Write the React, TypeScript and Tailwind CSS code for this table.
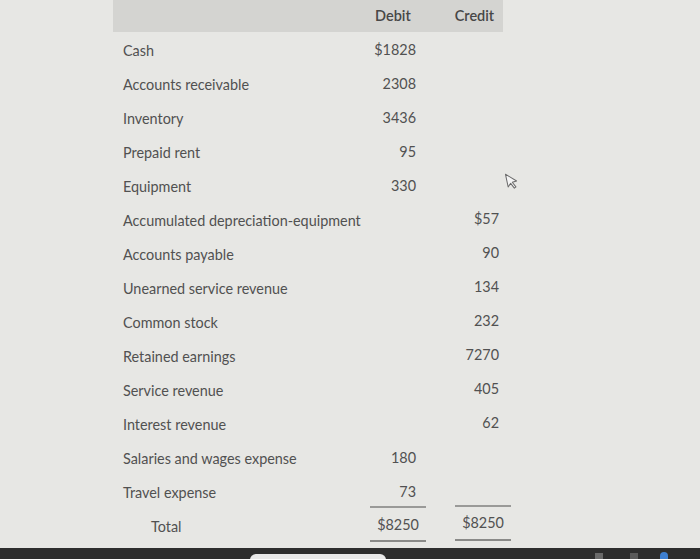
import React from "react";

type Row = { label: string; debit?: string; credit?: string };

const rows: Row[] = [
  { label: "Cash", debit: "$1828" },
  { label: "Accounts receivable", debit: "2308" },
  { label: "Inventory", debit: "3436" },
  { label: "Prepaid rent", debit: "95" },
  { label: "Equipment", debit: "330" },
  { label: "Accumulated depreciation-equipment", credit: "$57" },
  { label: "Accounts payable", credit: "90" },
  { label: "Unearned service revenue", credit: "134" },
  { label: "Common stock", credit: "232" },
  { label: "Retained earnings", credit: "7270" },
  { label: "Service revenue", credit: "405" },
  { label: "Interest revenue", credit: "62" },
  { label: "Salaries and wages expense", debit: "180" },
  { label: "Travel expense", debit: "73" },
];

export default function App() {
  return (
    <div
      className="relative w-[700px] h-[559px] overflow-hidden bg-[#e7e7e4] text-[#515151] flex flex-col"
      style={{ fontFamily: "Lato, 'Open Sans', sans-serif" }}
    >
      <div className="flex-1 pl-[113px]">
        <div className="w-[390px] h-8 bg-[#d4d4d1] flex items-start pt-[5px] text-[14.5px] font-semibold text-[#474747]">
          <span className="ml-[262px]">Debit</span>
          <span className="ml-[44px]">Credit</span>
        </div>
        <div className="pt-[2px]">
          {rows.map((r) => (
            <div key={r.label} className="flex h-[34px] items-center text-[14.4px]">
              <div className="w-[257px] pl-[10px] whitespace-nowrap">{r.label}</div>
              <div className="w-[56px] pr-[10px] text-right -translate-y-[1px]">{r.debit ?? ""}</div>
              <div className="w-[29px]" />
              <div className="w-[56px] pr-[12px] text-right -translate-y-[2px]">{r.credit ?? ""}</div>
            </div>
          ))}
        </div>
        <div className="flex h-[38px] items-center text-[14.4px] mt-[-5px]">
          <div className="w-[257px] pl-[38px] pt-[5px]">Total</div>
          <div className="w-[56px] h-[36px] flex items-center justify-center pt-[2px] border-t-2 border-b-2 border-t-[#9a9a98] border-b-[#8a8a88]">
            $8250
          </div>
          <div className="w-[29px]" />
          <div className="w-[56px] h-[36px] flex items-center justify-center border-t-2 border-b-2 border-t-[#9a9a98] border-b-[#8a8a88] -translate-y-[1px]">
            $8250
          </div>
        </div>
      </div>
      <div className="h-[11px] bg-[#2e2e2e] relative">
        <div className="absolute left-[250px] top-[6px] w-[136px] h-[12px] rounded-t-[6px] bg-[#e9e9e9]" />
        <div className="absolute left-[595px] top-[5px] w-[8px] h-[6px] bg-[#6a6a6a]" />
        <div className="absolute left-[630px] top-[5px] w-[8px] h-[6px] bg-[#5a5a5a]" />
        <div className="absolute left-[660px] top-[4px] w-[8px] h-[7px] rounded-t bg-[#3d7fd1]" />
      </div>
      <svg className="absolute left-[505px] top-[172px]" width="14" height="18" viewBox="0 0 14 18">
        <path
          d="M2 1 L2 14 L5.2 11 L7.8 16.5 L9.6 15.6 L7 10.3 L11.5 10 Z"
          fill="#f4f4f4"
          stroke="#6a6a6a"
          strokeWidth="1"
          strokeLinejoin="round"
          transform="rotate(-12 7 9)"
        />
      </svg>
    </div>
  );
}
